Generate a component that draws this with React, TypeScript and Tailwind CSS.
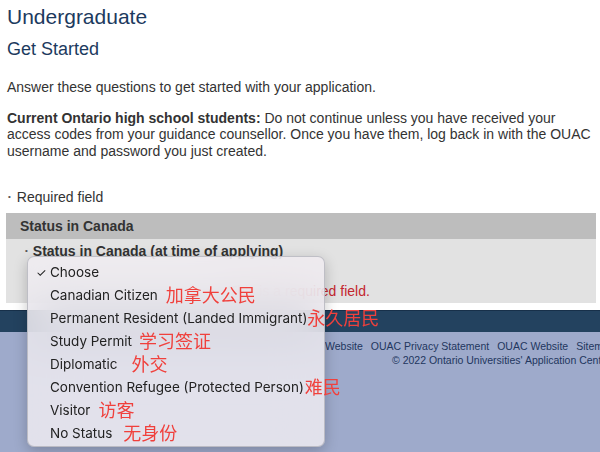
// Application start page with the native "Status in Canada" select open,
// annotated in red with the Chinese meaning of each option.
const OPTIONS: { label: string; zh?: string; gap: string; checked?: boolean }[] = [
  { label: "Choose", gap: "", checked: true },
  { label: "Canadian Citizen", zh: "加拿大公民", gap: "ml-[8px]" },
  { label: "Permanent Resident (Landed Immigrant)", zh: "永久居民", gap: "ml-[0px]" },
  { label: "Study Permit", zh: "学习签证", gap: "ml-[7px]" },
  { label: "Diplomatic", zh: "外交", gap: "ml-[14px]" },
  { label: "Convention Refugee (Protected Person)", zh: "难民", gap: "ml-[1px]" },
  { label: "Visitor", zh: "访客", gap: "ml-[8px]" },
  { label: "No Status", zh: "无身份", gap: "ml-[11px]" },
];

const FOOTER_LINKS = ["Website", "OUAC Privacy Statement", "OUAC Website", "Sitemap"];

export default function App() {
  return (
    <div className="relative flex h-[452px] w-full flex-col overflow-hidden bg-white font-['Liberation_Sans',Arial,sans-serif] text-[#333]">
      <div className="px-[7px]">
        <h1 className="pt-[5px] text-[21px] leading-[24px] text-[#1c3a5e]">Undergraduate</h1>
        <h2 className="mt-[9px] text-[18px] leading-[22px] text-[#1c3a5e]">Get Started</h2>
        <p className="mt-[19px] text-[14px] leading-[16.5px]">
          Answer these questions to get started with your application.
        </p>
        <p className="mt-[14px] text-[14px] leading-[16.5px]">
          <b>Current Ontario high school students:</b> Do not continue unless you have received your
          access codes from your guidance counsellor. Once you have them, log back in with the OUAC
          username and password you just created.
        </p>
        <p className="mt-[29.5px] flex items-center text-[14px] leading-[16.5px]">
          <span className="ml-[1px] mr-[6px] text-[8px] text-[#555]">•</span>Required field
        </p>
      </div>

      {/* Status in Canada panel */}
      <div className="ml-[6px] mr-[4px] mt-[8px]">
        <div className="h-[26px] bg-[#bdbdbd] pl-[14px] text-[14px] font-bold leading-[26px]">
          Status in Canada
        </div>
        <div className="h-[64px] bg-[#e2e2e2] pl-[19px] pt-[4px]">
          <div className="flex items-center text-[14px] font-bold leading-[16px]">
            <span className="mr-[5px] text-[8px] font-normal text-[#555]">•</span>
            Status in Canada (at time of applying)
          </div>
          <div className="ml-[204px] mt-[24px] text-[14px] leading-[16px] text-[#c4262e]">
            This is a required field.
          </div>
        </div>
      </div>

      <div className="mt-[7px] h-[22px] border-t border-[#17304a] bg-[#23425f]" />

      <footer className="flex-1 bg-[#9eaacb] pt-[7px] text-[10.5px] leading-[14px] text-[#22365e]">
        <div className="flex gap-[8px] whitespace-nowrap pl-[325px]">
          {FOOTER_LINKS.map((l) => (
            <span key={l} className="shrink-0">
              {l}
            </span>
          ))}
        </div>
        <div className="whitespace-nowrap pl-[392px]">
          © 2022 Ontario Universities' Application Centre
        </div>
      </footer>

      {/* open native select menu */}
      <div className="absolute left-[27px] top-[256px] h-[191px] w-[298px] rounded-[7px] border border-[#a9abb3]/70 bg-[rgba(240,237,241,0.82)] pt-[4px] shadow-[0_4px_14px_rgba(0,0,0,0.22)] backdrop-blur-xl font-['Inter','Noto_Sans',sans-serif] text-[13.5px] text-[#222]">
        {OPTIONS.map((o) => (
          <div key={o.label} className="flex h-[23px] items-center whitespace-nowrap pl-[8px]">
            <span className="w-[14px] shrink-0 text-[12px]">{o.checked ? "✓" : ""}</span>
            <span className="shrink-0">{o.label}</span>
            {o.zh && (
              <span
                className={`${o.gap} mb-[3px] shrink-0 font-['Noto_Sans_CJK_SC',sans-serif] text-[18px] leading-none text-[#f0403c]`}
              >
                {o.zh}
              </span>
            )}
          </div>
        ))}
      </div>
    </div>
  );
}
